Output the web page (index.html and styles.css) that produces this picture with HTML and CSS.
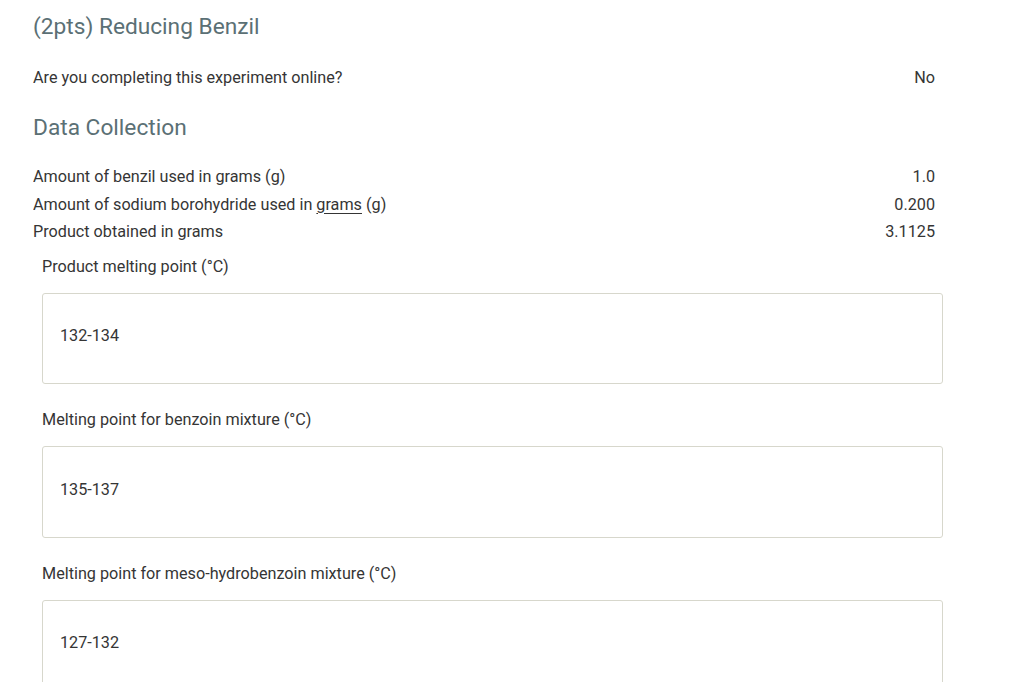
FILE: index.html
```html
<!DOCTYPE html>
<html>
<head>
<meta charset="utf-8">
<link rel="stylesheet" href="styles.css">
</head>
<body>
<div class="page">
  <h1 class="title">(2pts) Reducing Benzil</h1>
  <div class="row question">
    <span>Are you completing this experiment online?</span>
    <span class="value">No</span>
  </div>
  <h2 class="title section">Data Collection</h2>
  <div class="data">
    <div class="row"><span>Amount of benzil used in grams (g)</span><span class="value">1.0</span></div>
    <div class="row"><span>Amount of sodium borohydride used in <u>grams</u> (g)</span><span class="value">0.200</span></div>
    <div class="row"><span>Product obtained in grams</span><span class="value">3.1125</span></div>
  </div>
  <div class="field first">
    <div class="label">Product melting point (°C)</div>
    <div class="box">132-134</div>
  </div>
  <div class="field">
    <div class="label">Melting point for benzoin mixture (°C)</div>
    <div class="box">135-137</div>
  </div>
  <div class="field">
    <div class="label">Melting point for meso-hydrobenzoin mixture (°C)</div>
    <div class="box">127-132</div>
  </div>
</div>
</body>
</html>
```
FILE: styles.css
```css
html, body {
  margin: 0;
  padding: 0;
  background: #ffffff;
}
body {
  font-family: Roboto, "Liberation Sans", sans-serif;
  color: #353535;
  font-size: 16.2px;
  line-height: 20px;
}
.page {
  width: 910px;
  margin-left: 33px;
  overflow: hidden;
  height: 682px;
}
.title {
  font-size: 22.7px;
  font-weight: 400;
  line-height: 30px;
  color: #5b7075;
  margin: 12px 0 26px 0;
}
.section {
  margin: 25px 0 20px 0;
}
.row {
  display: flex;
  justify-content: space-between;
  padding-right: 8px;
}
.data .row {
  line-height: 27.5px;
}
.row u {
  text-decoration-thickness: 1px;
  text-underline-offset: 3px;
}
.field {
  margin-left: 9px;
  margin-top: 26px;
}
.field.first {
  margin-top: 11px;
}
.label {
  line-height: 20px;
  margin-bottom: 16px;
}
.box {
  border: 1px solid #d7d7cc;
  border-radius: 3px;
  padding: 32.5px 17px 37px 17px;
  line-height: 20px;
}
```
